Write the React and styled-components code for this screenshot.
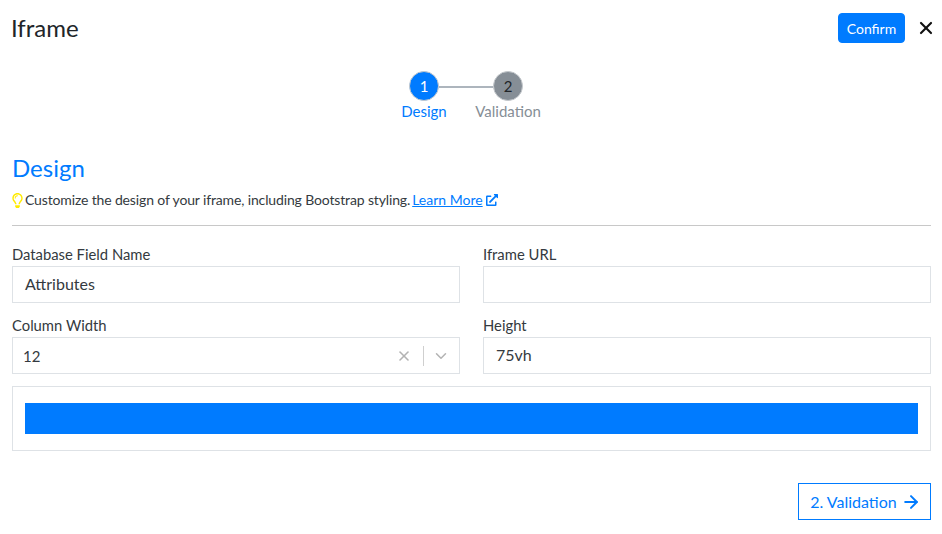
import React from 'react';
import styled, { createGlobalStyle } from 'styled-components';
import { X, ChevronDown, ArrowRight } from 'lucide-react';
import { FaRegLightbulb, FaExternalLinkAlt } from 'react-icons/fa';

const GlobalStyle = createGlobalStyle`
    html, body {
        margin: 0;
        padding: 0;
        background: #fff;
        font-family: "Lato", "Liberation Sans", sans-serif;
        color: #212529;
    }
    * {
        box-sizing: border-box;
    }
`;

const Page = styled.div`
    width: 942px;
    height: 534px;
    padding: 13px 11px 0 12px;
    overflow: hidden;
`;

const Header = styled.div`
    display: flex;
    align-items: center;
    justify-content: space-between;
    height: 30px;
`;

const Title = styled.h1`
    margin: 0 0 0 -1px;
    font-size: 24px;
    font-weight: 400;
    line-height: 30px;
`;

const HeaderActions = styled.div`
    display: flex;
    align-items: center;
    gap: 11px;
`;

const ConfirmButton = styled.button`
    width: 67px;
    height: 30px;
    padding: 0;
    border: 1px solid #007bff;
    border-radius: 4px;
    background: #007bff;
    color: #fff;
    font-family: inherit;
    font-size: 14px;
`;

const CloseIcon = styled(X)`
    display: block;
    margin-right: -5px;
    color: #111;
`;

const Stepper = styled.div`
    display: flex;
    justify-content: center;
    gap: 24px;
    margin-top: 28px;
    padding-right: 11px;
`;

const Step = styled.div`
    position: relative;
    display: flex;
    flex-direction: column;
    align-items: center;
    width: 60px;
`;

const StepCircle = styled.div`
    display: flex;
    align-items: center;
    justify-content: center;
    width: 30px;
    height: 30px;
    border: 1px solid #c4c8cc;
    border-radius: 50%;
    background: ${(p) => (p.$active ? '#007bff' : '#868e96')};
    color: ${(p) => (p.$active ? '#fff' : '#212529')};
    font-size: 15px;
`;

const StepLine = styled.div`
    position: absolute;
    top: 15px;
    left: 45px;
    width: 54px;
    height: 2px;
    background: #adb5bd;
`;

const StepLabel = styled.div`
    margin-top: 1px;
    font-size: 15px;
    line-height: 18px;
    white-space: nowrap;
    color: ${(p) => (p.$active ? '#007bff' : '#868e96')};
`;

const SectionTitle = styled.h2`
    margin: 33px 0 0;
    font-size: 24px;
    font-weight: 400;
    line-height: 29px;
    color: #007bff;
`;

const Hint = styled.div`
    display: flex;
    align-items: center;
    margin-top: 9px;
    font-size: 14px;
    line-height: 18px;
    color: #343a40;
`;

const HintIcon = styled(FaRegLightbulb)`
    flex: none;
    width: 11px;
    height: 15px;
    margin-right: 2px;
    color: #ffeb00;
`;

const HintText = styled.span`
    letter-spacing: -0.14px;
`;

const LearnLink = styled.a`
    display: inline-flex;
    align-items: center;
    gap: 3px;
    margin-left: 2px;
    color: #007bff;
    text-decoration: underline;
`;

const Divider = styled.hr`
    margin: 16px 0 0;
    border: 0;
    border-top: 1px solid #c8c8c8;
`;

const FormGrid = styled.div`
    display: grid;
    grid-template-columns: 448px 448px;
    column-gap: 23px;
    row-gap: 13px;
    margin-top: 19px;
`;

const Field = styled.div`
    display: flex;
    flex-direction: column;
`;

const FieldLabel = styled.label`
    height: 21px;
    font-size: 14.8px;
    line-height: 19px;
    color: #343a40;
`;

const TextValue = styled.div`
    display: flex;
    align-items: center;
    height: 37px;
    padding: 0 12px 2px;
    border: 1px solid #dee2e6;
    font-size: 16px;
    color: #343a40;
`;

const SelectBox = styled(TextValue)`
    justify-content: space-between;
    padding: 0 9px 0 10px;
    font-size: 15px;
`;

const SelectControls = styled.div`
    display: flex;
    align-items: center;
    color: #b3b3b3;
`;

const ControlDivider = styled.span`
    width: 1px;
    height: 20px;
    margin: 0 8px 0 11px;
    background: #cfcfcf;
`;

const ColorBox = styled.div`
    height: 65px;
    margin-top: 12px;
    padding: 16px 12px;
    border: 1px solid #dee2e6;
`;

const ColorBar = styled.div`
    height: 31px;
    background: #007bff;
`;

const Footer = styled.div`
    display: flex;
    justify-content: flex-end;
    margin-top: 32px;
`;

const NextButton = styled.button`
    display: flex;
    align-items: center;
    justify-content: center;
    gap: 4px;
    width: 133px;
    height: 37px;
    padding: 0 0 0 2px;
    border: 1px solid #007bff;
    background: #fff;
    color: #007bff;
    font-family: inherit;
    font-size: 16px;
`;

const App = () => {
    return (
        <Page>
            <GlobalStyle />
            <Header>
                <Title>Iframe</Title>
                <HeaderActions>
                    <ConfirmButton>Confirm</ConfirmButton>
                    <CloseIcon size={20} strokeWidth={2.6} />
                </HeaderActions>
            </Header>
            <Stepper>
                <Step>
                    <StepCircle $active>1</StepCircle>
                    <StepLine />
                    <StepLabel $active>Design</StepLabel>
                </Step>
                <Step>
                    <StepCircle>2</StepCircle>
                    <StepLabel>Validation</StepLabel>
                </Step>
            </Stepper>
            <SectionTitle>Design</SectionTitle>
            <Hint>
                <HintIcon />
                <HintText>Customize the design of your iframe, including Bootstrap styling.</HintText>
                <LearnLink href="#">
                    Learn More
                    <FaExternalLinkAlt size={12} />
                </LearnLink>
            </Hint>
            <Divider />
            <FormGrid>
                <Field>
                    <FieldLabel>Database Field Name</FieldLabel>
                    <TextValue>Attributes</TextValue>
                </Field>
                <Field>
                    <FieldLabel>Iframe URL</FieldLabel>
                    <TextValue />
                </Field>
                <Field>
                    <FieldLabel>Column Width</FieldLabel>
                    <SelectBox>
                        12
                        <SelectControls>
                            <X size={16} strokeWidth={2.4} />
                            <ControlDivider />
                            <ChevronDown size={18} strokeWidth={2} />
                        </SelectControls>
                    </SelectBox>
                </Field>
                <Field>
                    <FieldLabel>Height</FieldLabel>
                    <TextValue>75vh</TextValue>
                </Field>
            </FormGrid>
            <ColorBox>
                <ColorBar />
            </ColorBox>
            <Footer>
                <NextButton>
                    2. Validation
                    <ArrowRight size={20} strokeWidth={2.4} />
                </NextButton>
            </Footer>
        </Page>
    );
};

export default App;
